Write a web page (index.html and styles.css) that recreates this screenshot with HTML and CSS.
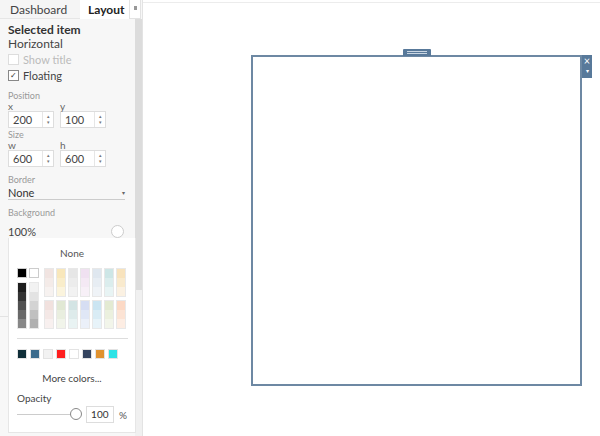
FILE: index.html
```html
<!DOCTYPE html>
<html lang="en">

<head>
    <meta charset="UTF-8">
    <meta name="viewport" content="width=device-width, initial-scale=1.0">
    <link rel="stylesheet" href="styles.css">
</head>

<body>
    <aside class="sidebar">
        <div class="tabs">
            <div class="tab">Dashboard</div>
            <div class="tab active">Layout</div>
            <div class="tab-toggle"><span class="dot"></span></div>
        </div>

        <div class="panel">
            <div class="content">
                <div class="title">Selected item</div>
                <div class="subtitle">Horizontal</div>
                <label class="check disabled"><span class="box"></span>Show title</label>
                <label class="check"><span class="box checked">&#10003;</span>Floating</label>

                <div class="section">Position</div>
                <div class="pair">
                    <div class="field">
                        <div class="field-label">x</div>
                        <div class="spin"><span class="val">200</span><span class="arrows">&#9652;<br>&#9662;</span></div>
                    </div>
                    <div class="field">
                        <div class="field-label">y</div>
                        <div class="spin"><span class="val">100</span><span class="arrows">&#9652;<br>&#9662;</span></div>
                    </div>
                </div>

                <div class="section tight">Size</div>
                <div class="pair">
                    <div class="field">
                        <div class="field-label">w</div>
                        <div class="spin"><span class="val">600</span><span class="arrows">&#9652;<br>&#9662;</span></div>
                    </div>
                    <div class="field">
                        <div class="field-label">h</div>
                        <div class="spin"><span class="val">600</span><span class="arrows">&#9652;<br>&#9662;</span></div>
                    </div>
                </div>

                <div class="section">Border</div>
                <div class="select"><span>None</span><span class="caret">&#9662;</span></div>

                <div class="section">Background</div>
                <div class="bg-row"><span>100%</span><span class="circle"></span></div>

                <div class="divider"></div>
            </div>
            <div class="scrollbar"><div class="thumb"></div></div>
        </div>

        <!-- colour picker opened from the Background row -->
        <div class="picker">
            <div class="none">None</div>
            <div class="palette">
                <div class="greys">
                    <div class="pair-sq">
                        <span class="sq" style="background:#000"></span>
                        <span class="sq" style="background:#fff"></span>
                    </div>
                    <div class="pair-sq">
                        <div class="col">
                            <span style="background:#1e1e1e"></span>
                            <span style="background:#343434"></span>
                            <span style="background:#505050"></span>
                            <span style="background:#696969"></span>
                            <span style="background:#878787"></span>
                        </div>
                        <div class="col">
                            <span style="background:#f2f2f2"></span>
                            <span style="background:#e3e3e3"></span>
                            <span style="background:#d3d3d3"></span>
                            <span style="background:#c0c0c0"></span>
                            <span style="background:#b0b0b0"></span>
                        </div>
                    </div>
                </div>
                <div class="tints">
                    <div class="tint-row">
                        <div class="col"><span style="background:#f1e4e1"></span><span style="background:#f4ebe8"></span><span style="background:#f7f2f0"></span></div>
                        <div class="col"><span style="background:#f8e7bb"></span><span style="background:#f9edca"></span><span style="background:#fbf4dd"></span></div>
                        <div class="col"><span style="background:#e6e6e6"></span><span style="background:#ececec"></span><span style="background:#f2f2f2"></span></div>
                        <div class="col"><span style="background:#f0e1f1"></span><span style="background:#f4e9f4"></span><span style="background:#f7f0f7"></span></div>
                        <div class="col"><span style="background:#dfe7ef"></span><span style="background:#e7edf3"></span><span style="background:#eff3f7"></span></div>
                        <div class="col"><span style="background:#cde6e6"></span><span style="background:#dbeded"></span><span style="background:#e8f4f4"></span></div>
                        <div class="col"><span style="background:#f8e3bd"></span><span style="background:#f9eacd"></span><span style="background:#fbf1e2"></span></div>
                    </div>
                    <div class="tint-row">
                        <div class="col"><span style="background:#f1e1de"></span><span style="background:#f4e8e6"></span><span style="background:#f8f0ef"></span></div>
                        <div class="col"><span style="background:#e1e8d4"></span><span style="background:#e9eedf"></span><span style="background:#f1f4ea"></span></div>
                        <div class="col"><span style="background:#d3e4e4"></span><span style="background:#deebeb"></span><span style="background:#e9f3f3"></span></div>
                        <div class="col"><span style="background:#d6def3"></span><span style="background:#e0e7f6"></span><span style="background:#ebf0f9"></span></div>
                        <div class="col"><span style="background:#cbe5f2"></span><span style="background:#d9ecf5"></span><span style="background:#e7f3f9"></span></div>
                        <div class="col"><span style="background:#e3ead2"></span><span style="background:#ebf0de"></span><span style="background:#f2f5ea"></span></div>
                        <div class="col"><span style="background:#fcd9c5"></span><span style="background:#fce3d4"></span><span style="background:#fdede3"></span></div>
                    </div>
                </div>
            </div>

            <div class="rule"></div>

            <div class="recent">
                <span class="sq" style="background:#0f2e38"></span>
                <span class="sq" style="background:#3c6b8c"></span>
                <span class="sq" style="background:#f2f2f2"></span>
                <span class="sq" style="background:#ff1f1f"></span>
                <span class="sq" style="background:#ffffff"></span>
                <span class="sq" style="background:#34445f"></span>
                <span class="sq" style="background:#e0922f"></span>
                <span class="sq" style="background:#2ee3e6"></span>
            </div>

            <div class="more">More colors...</div>

            <div class="opacity-label">Opacity</div>
            <div class="opacity">
                <div class="slider"><span class="knob"></span></div>
                <div class="num">100</div>
                <span class="pct">%</span>
            </div>
        </div>
    </aside>

    <main class="canvas">
        <!-- floating horizontal container, 600 x 600 -->
        <div class="frame">
            <div class="grip"><span></span><span></span></div>
            <div class="frame-tools">
                <span class="close">&#215;</span>
                <span class="menu">&#9662;</span>
            </div>
        </div>
    </main>
</body>

</html>
```

FILE: styles.css
```css
body {
    margin: 0;
    display: flex;
    height: 436px;
    overflow: hidden;
    font-family: "Lato", "Open Sans", sans-serif;
    color: #333;
    background: #fff;
}

.sidebar {
    position: relative;
    width: 142px;
    flex-shrink: 0;
    background: #f7f7f7;
    border-right: 1px solid #e3e3e3;
}

.tabs {
    display: flex;
    height: 19px;
    font-size: 12px;
}

.tab {
    width: 80px;
    line-height: 19px;
    padding-left: 10px;
    box-sizing: border-box;
    color: #444;
    background: #f5f5f5;
    border-bottom: 1px solid #e6e6e6;
}

.tab.active {
    width: 49px;
    padding-left: 8px;
    font-weight: bold;
    color: #222;
    background: #fff;
    border-bottom: none;
}

.tab-toggle {
    width: 12px;
    display: flex;
    justify-content: center;
    padding-top: 6px;
    box-sizing: border-box;
    background: #fff;
    border: 1px solid #e3e3e3;
    border-top: none;
}

.dot {
    width: 3px;
    height: 4px;
    background: #999;
}

.panel {
    display: flex;
    height: 417px;
}

.content {
    width: 135px;
    padding-left: 8px;
    box-sizing: border-box;
    font-size: 11px;
}

.scrollbar {
    width: 7px;
    background: #f0f0f0;
}

.thumb {
    height: 271px;
    background: #dcdcdc;
}

.title {
    margin-top: 4px;
    font-size: 12px;
    font-weight: bold;
    line-height: 14px;
    color: #333;
}

.subtitle {
    font-size: 12px;
    line-height: 14px;
    color: #444;
}

.check {
    display: flex;
    align-items: center;
    height: 16px;
    gap: 4px;
    font-size: 11px;
    color: #444;
}

.check.disabled {
    color: #bbb;
}

.box {
    width: 9px;
    height: 9px;
    border: 1px solid #888;
    background: #fff;
    font-size: 8px;
    line-height: 9px;
    text-align: center;
    color: #333;
}

.check.disabled .box {
    border-color: #ddd;
}

.section {
    margin-top: 7px;
    font-size: 9px;
    line-height: 12px;
    color: #999;
}

.section.tight {
    margin-top: 1px;
}

.pair {
    display: flex;
    gap: 6px;
}

.field-label {
    font-size: 10px;
    line-height: 9px;
    color: #666;
}

.spin {
    display: flex;
    width: 46px;
    height: 17px;
    box-sizing: border-box;
    border: 1px solid #ddd;
    background: #fff;
}

.spin .val {
    flex: 1;
    padding-left: 4px;
    font-size: 11px;
    line-height: 15px;
    color: #444;
}

.spin .arrows {
    width: 10px;
    border-left: 1px solid #e6e6e6;
    font-size: 5px;
    line-height: 6px;
    padding-top: 1px;
    text-align: center;
    color: #777;
}

.select {
    display: flex;
    justify-content: space-between;
    width: 117px;
    height: 13px;
    font-size: 11px;
    line-height: 13px;
    color: #333;
    border-bottom: 1px solid #ccc;
}

.caret {
    font-size: 6px;
    color: #666;
}

.bg-row {
    display: flex;
    justify-content: space-between;
    align-items: center;
    width: 116px;
    height: 18px;
    margin-top: 3px;
    font-size: 11px;
    color: #444;
}

.circle {
    width: 11px;
    height: 11px;
    border-radius: 50%;
    border: 1px solid #ccc;
    background: #fff;
}

.divider {
    margin: 76px -8px 0;
    border-top: 1px solid #e3e3e3;
}

/* colour picker */

.picker {
    position: absolute;
    left: 8px;
    top: 238px;
    width: 128px;
    height: 195px;
    box-sizing: border-box;
    padding: 0 8px;
    background: #fff;
    border: 1px solid #e6e6e6;
    border-top: none;
}

.none {
    margin-top: 8px;
    text-align: center;
    font-size: 10px;
    line-height: 14px;
    color: #555;
}

.palette {
    display: flex;
    gap: 5px;
    margin-top: 8px;
}

.greys {
    display: flex;
    flex-direction: column;
    gap: 4px;
}

.pair-sq {
    display: flex;
    gap: 2px;
}

.sq {
    width: 10px;
    height: 10px;
    box-sizing: border-box;
    border: 1px solid #ccc;
}

.col {
    display: flex;
    flex-direction: column;
    width: 10px;
    box-sizing: border-box;
    border: 1px solid #e8e8e8;
}

.col span {
    height: 9px;
}

.tints {
    display: flex;
    flex-direction: column;
    gap: 3px;
}

.tint-row {
    display: flex;
    gap: 2px;
}

.rule {
    margin-top: 9px;
    margin-right: -1px;
    border-top: 1px solid #ddd;
}

.recent {
    display: flex;
    gap: 3px;
    margin-top: 10px;
}

.recent .sq {
    width: 10px;
    border-color: #e3e3e3;
}

.more {
    margin-top: 13px;
    text-align: center;
    font-size: 10px;
    line-height: 12px;
    color: #444;
}

.opacity-label {
    margin-top: 9px;
    font-size: 10px;
    line-height: 10px;
    color: #444;
}

.opacity {
    display: flex;
    align-items: center;
    margin-top: 3px;
}

.slider {
    position: relative;
    width: 62px;
    height: 1px;
    background: #ccc;
}

.knob {
    position: absolute;
    right: -6px;
    top: -6px;
    width: 10px;
    height: 10px;
    border-radius: 50%;
    border: 1px solid #888;
    background: #fff;
}

.num {
    width: 29px;
    height: 17px;
    margin-left: 10px;
    box-sizing: border-box;
    padding-left: 4px;
    border: 1px solid #ddd;
    font-size: 10px;
    line-height: 15px;
    color: #333;
}

.pct {
    margin-left: 5px;
    font-size: 10px;
    color: #555;
}

/* dashboard canvas */

.canvas {
    position: relative;
    flex: 1;
    margin-top: 2px;
    border-top: 1px solid #ececec;
}

.frame {
    position: absolute;
    left: 108px;
    top: 52px;
    width: 331px;
    height: 331px;
    box-sizing: border-box;
    border: 2px solid #6d88a3;
}

.grip {
    position: absolute;
    left: 150px;
    top: -8px;
    width: 28px;
    height: 7px;
    display: flex;
    flex-direction: column;
    justify-content: center;
    gap: 1px;
    padding: 0 4px;
    box-sizing: border-box;
    background: #58799a;
    border-radius: 1px 1px 0 0;
}

.grip span {
    height: 1px;
    background: #c9d6e3;
}

.frame-tools {
    position: absolute;
    right: -12px;
    top: -2px;
    width: 10px;
    height: 23px;
    display: flex;
    flex-direction: column;
    align-items: center;
    background: #58799a;
    color: #fff;
}

.close {
    font-size: 11px;
    line-height: 11px;
}

.menu {
    font-size: 6px;
    line-height: 10px;
}
```
